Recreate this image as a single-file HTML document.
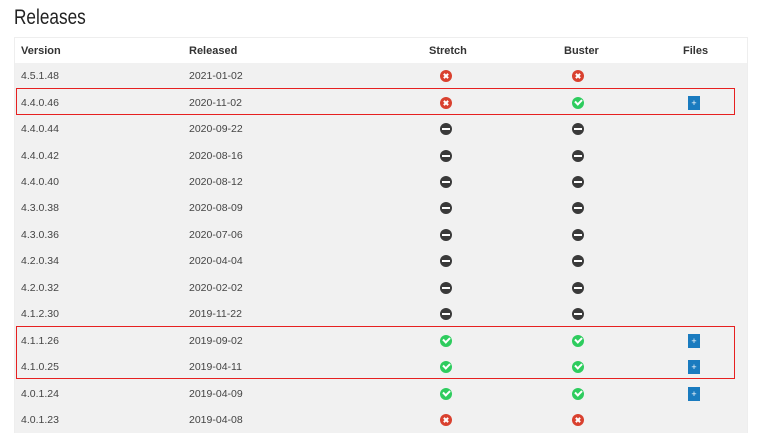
<!DOCTYPE html>
<html><head><style>
body{margin:0;background:#fff;font-family:"Liberation Sans",sans-serif;width:768px;height:429px;overflow:hidden;position:relative}
h1{position:absolute;left:14px;top:6px;margin:0;font-weight:normal;font-size:21px;color:#222;transform:scaleX(0.82);transform-origin:left top}
.tbl{position:absolute;left:14px;top:37px;width:732px;border:1px solid #eee;border-bottom:none}
.hd{height:25px;background:#fff;font-size:11px;font-weight:bold;color:#333;position:relative}
.row{height:26.46px;background:#f1f1f1;position:relative;font-size:10.5px;color:#444}
.c{position:absolute;top:50%;transform:translateY(-50%)}
.v{left:6px}.r{left:174px}
.i{position:absolute;top:50%;width:12px;height:12px;border-radius:50%;transform:translate(-50%,-50%)}
.x{background:#d9412f}.ok{background:#2ecc5e}.no{background:#3a3a3a}
.x:before,.x:after{content:"";position:absolute;left:3px;top:5px;width:6px;height:2px;background:#fff;transform:rotate(45deg)}
.x:after{transform:rotate(-45deg)}
.ok:after{content:"";position:absolute;left:3px;top:2px;width:5px;height:3px;border-left:2px solid #fff;border-bottom:2px solid #fff;transform:rotate(-45deg)}
.no:after{content:"";position:absolute;left:2px;top:5px;width:8px;height:2px;background:#fff}
.b{position:absolute;left:673px;top:50%;width:12px;height:14px;background:#1a7bbf;transform:translateY(-50%);color:#fff;font-size:9px;text-align:center;line-height:14px}
.box{position:absolute;border:1.5px solid #e62020;box-sizing:border-box}
</style></head><body>
<h1>Releases</h1>
<div class="tbl">
<div class="hd"><span class="c v">Version</span><span class="c r">Released</span><span class="c" style="left:414px">Stretch</span><span class="c" style="left:549px">Buster</span><span class="c" style="left:668px">Files</span></div>
<div class="row"><span class="c v">4.5.1.48</span><span class="c r">2021-01-02</span><i class="i x" style="left:431px"></i><i class="i x" style="left:563px"></i></div>
<div class="row"><span class="c v">4.4.0.46</span><span class="c r">2020-11-02</span><i class="i x" style="left:431px"></i><i class="i ok" style="left:563px"></i><span class="b">+</span></div>
<div class="row"><span class="c v">4.4.0.44</span><span class="c r">2020-09-22</span><i class="i no" style="left:431px"></i><i class="i no" style="left:563px"></i></div>
<div class="row"><span class="c v">4.4.0.42</span><span class="c r">2020-08-16</span><i class="i no" style="left:431px"></i><i class="i no" style="left:563px"></i></div>
<div class="row"><span class="c v">4.4.0.40</span><span class="c r">2020-08-12</span><i class="i no" style="left:431px"></i><i class="i no" style="left:563px"></i></div>
<div class="row"><span class="c v">4.3.0.38</span><span class="c r">2020-08-09</span><i class="i no" style="left:431px"></i><i class="i no" style="left:563px"></i></div>
<div class="row"><span class="c v">4.3.0.36</span><span class="c r">2020-07-06</span><i class="i no" style="left:431px"></i><i class="i no" style="left:563px"></i></div>
<div class="row"><span class="c v">4.2.0.34</span><span class="c r">2020-04-04</span><i class="i no" style="left:431px"></i><i class="i no" style="left:563px"></i></div>
<div class="row"><span class="c v">4.2.0.32</span><span class="c r">2020-02-02</span><i class="i no" style="left:431px"></i><i class="i no" style="left:563px"></i></div>
<div class="row"><span class="c v">4.1.2.30</span><span class="c r">2019-11-22</span><i class="i no" style="left:431px"></i><i class="i no" style="left:563px"></i></div>
<div class="row"><span class="c v">4.1.1.26</span><span class="c r">2019-09-02</span><i class="i ok" style="left:431px"></i><i class="i ok" style="left:563px"></i><span class="b">+</span></div>
<div class="row"><span class="c v">4.1.0.25</span><span class="c r">2019-04-11</span><i class="i ok" style="left:431px"></i><i class="i ok" style="left:563px"></i><span class="b">+</span></div>
<div class="row"><span class="c v">4.0.1.24</span><span class="c r">2019-04-09</span><i class="i ok" style="left:431px"></i><i class="i ok" style="left:563px"></i><span class="b">+</span></div>
<div class="row"><span class="c v">4.0.1.23</span><span class="c r">2019-04-08</span><i class="i x" style="left:431px"></i><i class="i x" style="left:563px"></i></div>
</div>
<div class="box" style="left:16px;top:88px;width:719px;height:27px"></div>
<div class="box" style="left:16px;top:326px;width:719px;height:53px"></div>
</body></html>
